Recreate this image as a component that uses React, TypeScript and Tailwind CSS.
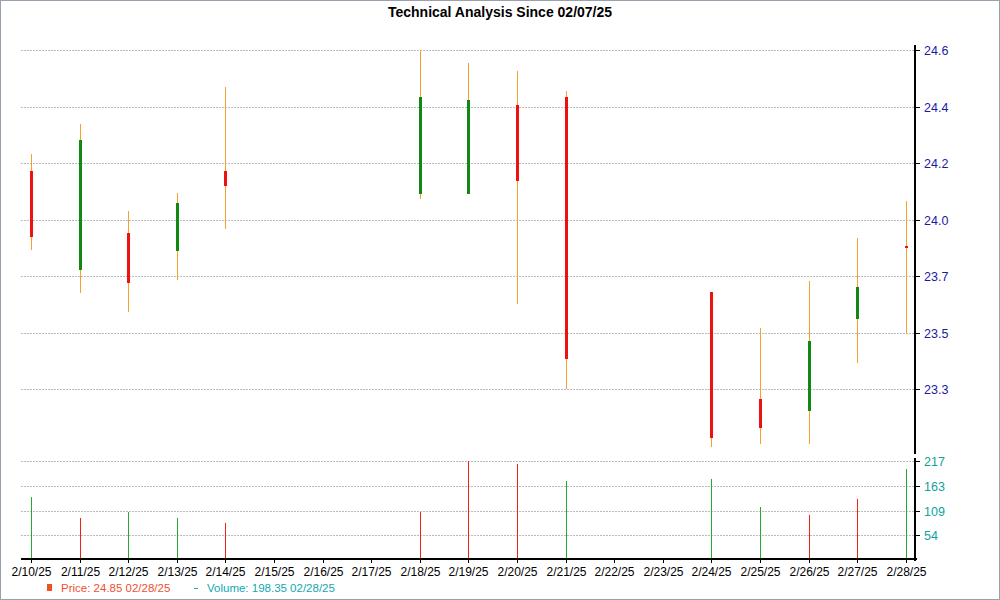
const dates = ['2/10/25','2/11/25','2/12/25','2/13/25','2/14/25','2/15/25','2/16/25','2/17/25','2/18/25','2/19/25','2/20/25','2/21/25','2/22/25','2/23/25','2/24/25','2/25/25','2/26/25','2/27/25','2/28/25'];
const xOf = (i: number) => Math.round(30 + i * 48.6) + 0.5;

// [index, high, bodyTop, bodyBottom, low, up]
const candles: [number, number, number, number, number, boolean][] = [
  [0, 153, 170, 236, 249, false],
  [1, 123, 139, 269, 292, true],
  [2, 210, 232, 282, 311, false],
  [3, 192, 202, 250, 279, true],
  [4, 86, 170, 185, 228, false],
  [8, 49, 96, 193, 198, true],
  [9, 62, 99, 193, 192, true],
  [10, 70, 104, 180, 303, false],
  [11, 90, 96, 358, 388, false],
  [14, 291, 291, 437, 446, false],
  [15, 327, 398, 427, 443, false],
  [16, 280, 340, 410, 443, true],
  [17, 237, 286, 318, 362, true],
  [18, 200, 245, 247, 333, false],
];

const volumes: [number, number, boolean][] = [
  [0, 496, true], [1, 517, false], [2, 511, true], [3, 517, true], [4, 522, false],
  [8, 511, false], [9, 460, false], [10, 463, false], [11, 480, true],
  [14, 478, true], [15, 506, true], [16, 514, false], [17, 498, false], [18, 468, true],
];

const priceTicks: [number, string][] = [[49, '24.6'], [106, '24.4'], [162, '24.2'], [219, '24.0'], [275, '23.7'], [332, '23.5'], [388, '23.3']];
const volTicks: [number, string][] = [[460, '217'], [485, '163'], [510, '109'], [534, '54']];

export default function App() {
  return (
    <div className="relative w-[1000px] h-[600px] bg-white border border-gray-400 overflow-hidden" style={{ fontFamily: '"Liberation Sans", Arial, sans-serif' }}>
      <div className="text-center text-[14px] font-bold text-black mt-[1px]">Technical Analysis Since 02/07/25</div>
      <svg className="absolute left-0 top-0" width={1000} height={600} fontFamily='"Liberation Sans", Arial, sans-serif' shapeRendering="crispEdges">
        {priceTicks.map(([y, t]) => (
          <g key={t}>
            <line x1={20} x2={914} y1={y + 0.5} y2={y + 0.5} stroke="#bbb" strokeDasharray="2 1" />
            <line x1={914} x2={919} y1={y + 0.5} y2={y + 0.5} stroke="#000" />
            <text x={923} y={y + 5} fontSize={12.5} fill="#1a1aa0">{t}</text>
          </g>
        ))}
        {volTicks.map(([y, t]) => (
          <g key={t}>
            <line x1={20} x2={914} y1={y + 0.5} y2={y + 0.5} stroke="#bbb" strokeDasharray="2 1" />
            <line x1={914} x2={919} y1={y + 0.5} y2={y + 0.5} stroke="#000" />
            <text x={923} y={y + 5} fontSize={12.5} fill="#10a0a0">{t}</text>
          </g>
        ))}
        <line x1={914} x2={914} y1={44} y2={453} stroke="#000" strokeWidth={2} />
        <line x1={914} x2={914} y1={457} y2={560} stroke="#000" strokeWidth={2} />
        <line x1={20} x2={916} y1={558} y2={558} stroke="#000" strokeWidth={2} />
        {candles.map(([i, h, bt, bb, l, up]) => {
          const x = xOf(i);
          return (
            <g key={i}>
              <line x1={x} x2={x} y1={h} y2={l} stroke="#f5a030" strokeWidth={1} />
              <rect x={x - 1.5} y={bt} width={3} height={Math.max(bb - bt, 2)} fill={up ? '#118811' : '#ee1111'} />
            </g>
          );
        })}
        {volumes.map(([i, y, up]) => (
          <line key={i} x1={xOf(i)} x2={xOf(i)} y1={y} y2={557} stroke={up ? '#22aa33' : '#ee2211'} strokeWidth={1} />
        ))}
        {dates.map((d, i) => (
          <g key={d}>
            <line x1={xOf(i)} x2={xOf(i)} y1={558} y2={562} stroke="#000" />
            <text x={xOf(i)} y={575} fontSize={12} textAnchor="middle" fill="#000">{d}</text>
          </g>
        ))}
        <rect x={46} y={583} width={5} height={7} fill="#f05020" />
        <text x={60} y={591} fontSize={11.5} fill="#f05030">Price: 24.85  02/28/25</text>
        <line x1={193} x2={197} y1={587.5} y2={587.5} stroke="#10a8b0" />
        <text x={206} y={591} fontSize={11.5} fill="#10a8b0">Volume: 198.35  02/28/25</text>
      </svg>
    </div>
  );
}
